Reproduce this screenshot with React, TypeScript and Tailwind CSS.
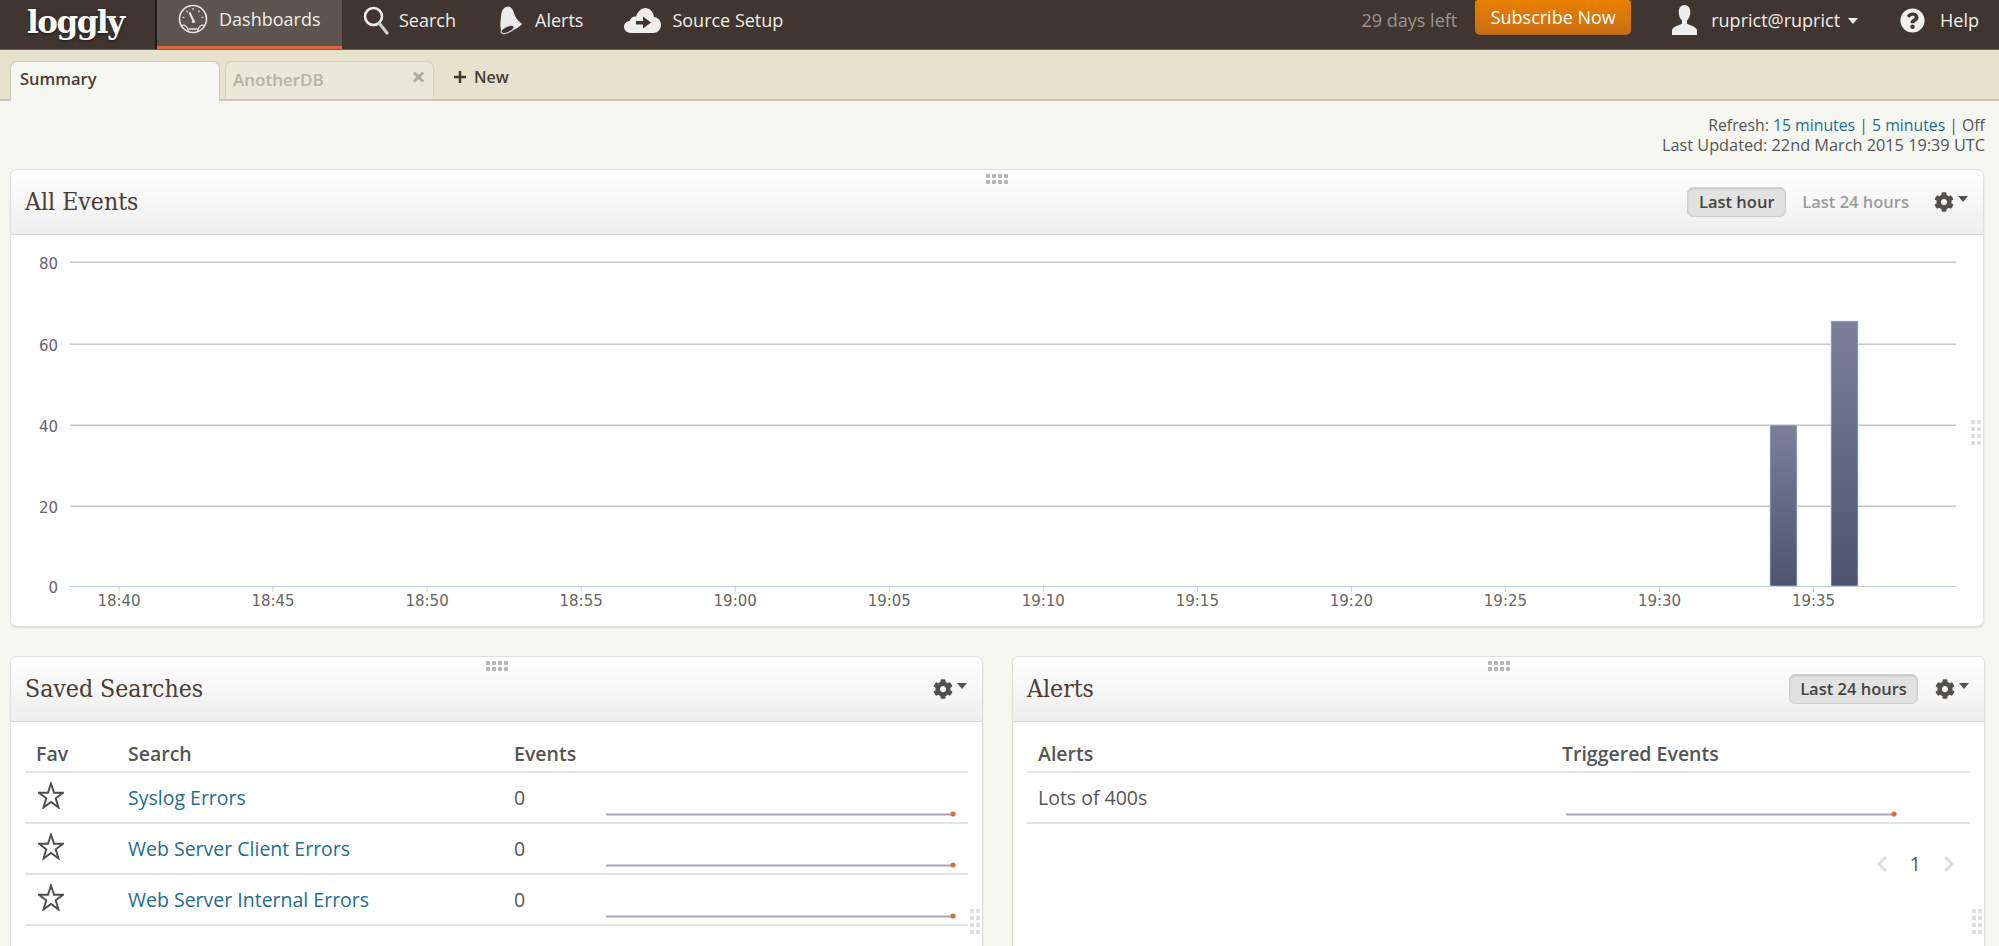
import React from "react";
import { FaCog, FaQuestionCircle, FaChevronLeft, FaChevronRight } from "react-icons/fa";

const sans = "font-['Open_Sans','Noto_Sans',sans-serif]";
const slab = "font-['DejaVu_Serif_Condensed','DejaVu_Serif',serif]";

function Gauge() {
  return (
    <svg width="30" height="30" viewBox="0 0 30 30" fill="none" stroke="#e8e6e3" className="shrink-0">
      <circle cx="15" cy="15" r="13.5" strokeWidth="1.6" />
      <path d="M15 4v3M8.5 6.5l1.5 2.4M21.5 6.5L20 8.9M4.5 13l2.8.7M25.500 13l-2.800.7" strokeWidth="1.2" strokeDasharray="2 1" />
      <path d="M11.500 8.500L15.500 17" strokeWidth="2" />
      <circle cx="15.500" cy="17.500" r="1.600" fill="#e8e6e3" stroke="none" />
      <path d="M3.500 21.500c3.500-1 6 .5 7 6.500M26.500 21.500c-3.500-1-6 .5-7 6.500M10.500 25h9" strokeWidth="1.300" />
    </svg>
  );
}
function SearchIcon() {
  return (
    <svg width="26" height="29" viewBox="0 0 26 29" fill="none" stroke="#eeeeee" className="shrink-0">
      <circle cx="10.500" cy="10.500" r="8.500" strokeWidth="2.600" />
      <path d="M16 17l8 10" strokeWidth="3.200" strokeLinecap="round" stroke="#cfcfcf" />
    </svg>
  );
}
function Bell() {
  return (
    <svg width="25" height="29" viewBox="0 0 25 29" className="shrink-0">
      <path d="M8 1C12-1 15 3 16 7c1 4 4 8 8 11-4 5-14 9-20 9-2-5-2-10-1-15C3 7 4 3 8 1z" fill="#ececec" />
      <ellipse cx="9.500" cy="23.500" rx="7" ry="3" transform="rotate(-26 9.500 23.500)" fill="#40362f" stroke="#d8d8d8" strokeWidth="1.200" />
    </svg>
  );
}
function Cloud() {
  return (
    <svg width="37" height="25" viewBox="0 0 37 25" className="shrink-0">
      <path d="M7 25c-4 0-7-2.700-7-6.200 0-3.300 2.500-5.600 5.800-6C6.800 9.500 9.500 8 12 8.500 13.800 3.500 17.500 0 21 0c5 0 8.500 4 9 9 4 .5 7 3.500 7 8 0 4.500-3.500 8-8 8z" fill="#eeeeee" />
      <path d="M12 13h7V8.500l8 6-8 6V16.500h-7z" fill="#40362f" />
    </svg>
  );
}
function UserIcon() {
  return (
    <svg width="25" height="32" viewBox="0 0 25 32" className="shrink-0">
      <path d="M12.500 0c3.800 0 5.800 3 5.800 7 0 3.500-1.300 6.700-3.300 8.500v3c2.500 2 9 2.800 10 6.500v5H0v-5c1-3.700 7.500-4.500 10-6.500v-3C8 13.700 6.700 10.500 6.700 7c0-4 2-7 5.800-7z" fill="#ededed" />
    </svg>
  );
}
function Caret({ color = "#eeeeee", className = "" }: { color?: string; className?: string }) {
  return (
    <svg width="10" height="6" viewBox="0 0 10 6" className={`shrink-0 ${className}`}>
      <path d="M0 0h10L5 6z" fill={color} />
    </svg>
  );
}
function Star() {
  return (
    <svg width="26" height="27" viewBox="0 0 26 27" fill="none" stroke="#4c4c4c" strokeWidth="1.900">
      <path d="M13 1.500l3 9.300h9l-7.300 5.500 2.800 9.200L13 20l-7.500 5.500 2.800-9.200L1 10.800h9z" />
    </svg>
  );
}
function Spark({ w }: { w: number }) {
  return (
    <svg width={w} height="8" viewBox={`0 0 ${w} 8`} className="block">
      <path d={`M0 4.500H${w - 3}`} stroke="#a9a3bd" strokeWidth="2" />
      <circle cx={w - 3} cy="4" r="2.600" fill="#d8703a" />
    </svg>
  );
}
function GripH() {
  return (
    <div className="absolute left-1/2 top-[4px] -translate-x-1/2 grid grid-cols-[repeat(4,4px)] gap-[2px]">
      {Array.from({ length: 8 }).map((_, i) => (
        <span key={i} className="w-[4px] h-[4px] rounded-[1px] bg-[#b5b5b5]" />
      ))}
    </div>
  );
}
function GripV({ className }: { className: string }) {
  return (
    <div className={`absolute grid grid-cols-[repeat(2,4px)] gap-x-[2px] gap-y-[3px] ${className}`}>
      {Array.from({ length: 8 }).map((_, i) => (
        <span key={i} className="w-[4px] h-[4px] rounded-[1px] bg-[#dddddd]" />
      ))}
    </div>
  );
}
function Gear({ gap = "ml-[4px]" }: { gap?: string }) {
  return (
    <div className="flex items-start">
      <FaCog size={20} color="#54504c" />
      <Caret color="#54504c" className={`${gap} mt-[4px]`} />
    </div>
  );
}
function PanelHeader({ title, children }: { title: string; children?: React.ReactNode }) {
  return (
    <div className="relative h-[65px] flex items-center pl-[14px] pr-[15px] border-b border-[#d6d6d6] rounded-t-[7px] bg-gradient-to-b from-[#ffffff] to-[#eeeeee]">
      <GripH />
      <h2 className={`${slab} text-[24.600px] leading-none font-normal text-[#4a3c33] pt-[1px]`}>{title}</h2>
      <div className="ml-auto flex items-center">{children}</div>
    </div>
  );
}

const ticks = ["18:40", "18:45", "18:50", "18:55", "19:00", "19:05", "19:10", "19:15", "19:20", "19:25", "19:30", "19:35"];

function Chart() {
  return (
    <svg width="1972" height="391" viewBox="11 235 1972 391" className="block">
      <defs>
        <linearGradient id="bar1" x1="0" y1="0" x2="0" y2="1">
          <stop offset="0" stopColor="#7a8099" />
          <stop offset="1" stopColor="#4c5470" />
        </linearGradient>
      </defs>
      {[
        [262, "80"],
        [344, "60"],
        [425, "40"],
        [506, "20"],
        [586, "0"],
      ].map(([y, t]) => (
        <g key={t as string}>
          {t !== "0" && <rect x="70" y={(y as number) - 0.5} width="1886" height="1.400" fill="#c4c4c4" />}
          <text x="58" y={(y as number) + 7} textAnchor="end" fontFamily="DejaVu Sans" fontSize="15" fill="#666666">
            {t}
          </text>
        </g>
      ))}
      <rect x="70" y="586" width="1886" height="1" fill="#b9cde0" />
      {ticks.map((t, i) => (
        <g key={t}>
          <rect x={118.500 + i * 154.050} y="586" width="1" height="6" fill="#c3d3e3" />
          <text x={119 + i * 154.050} y="606" textAnchor="middle" fontFamily="DejaVu Sans" fontSize="15" fill="#666666">
            {t}
          </text>
        </g>
      ))}
      <rect x="1770" y="425" width="27" height="161" fill="url(#bar1)" stroke="#c5cfe0" strokeWidth="0.700" />
      <rect x="1831" y="321" width="27" height="265" fill="url(#bar1)" stroke="#c5cfe0" strokeWidth="0.700" />
    </svg>
  );
}

const searches = ["Syslog Errors", "Web Server Client Errors", "Web Server Internal Errors"];

export default function App() {
  return (
    <div className={`${sans} w-[1999px] h-[946px] overflow-hidden bg-[#f6f7f1] text-[#555555]`}>
      {/* top bar */}
      <header className="h-[50px] flex bg-[#40362f] text-[#f0eeec] text-[18px] border-b border-[#6a6058]">
        <div className="w-[157px] border-r-2 border-[#1f1a17] pl-[27px] flex items-center pb-[5px] shrink-0">
          <span className={`font-['DejaVu_Serif',serif] font-bold text-[31px] leading-none text-white tracking-[-1.500px] [text-shadow:0_1px_3px_rgba(0,0,0,0.6)]`}>
            loggly
          </span>
        </div>
        <a className="w-[185px] h-[49px] shrink-0 flex items-center gap-[11px] pl-[21px] pb-[8px] bg-[#5c544d] border-b-[3px] border-[#d9673f]">
          <Gauge />
          <span>Dashboards</span>
        </a>
        <a className="flex items-center gap-[10px] pl-[21px] pb-[8px]">
          <SearchIcon />
          <span>Search</span>
        </a>
        <a className="flex items-center gap-[12px] pl-[42px] pb-[8px]">
          <Bell />
          <span>Alerts</span>
        </a>
        <a className="flex items-center gap-[11px] pl-[41px] pb-[8px]">
          <Cloud />
          <span>Source Setup</span>
        </a>
        <div className="ml-auto flex items-center pr-[20px] pb-[8px]">
          <span className="text-[#9a958f]">29 days left</span>
          <a className="ml-[18px] self-start mt-0 h-[35px] w-[156px] flex items-center justify-center rounded-b-[5px] rounded-t-[3px] bg-gradient-to-b from-[#ea7f00] to-[#c96f12] border-b border-[#b5651a] text-white">
            Subscribe Now
          </a>
          <span className="ml-[41px]">
            <UserIcon />
          </span>
          <span className="ml-[14px]">ruprict@ruprict</span>
          <Caret className="ml-[8px]" />
          <span className="ml-[42px]">
            <FaQuestionCircle size={25} color="#f0f0f0" />
          </span>
          <span className="ml-[15px]">Help</span>
        </div>
      </header>

      {/* tabs */}
      <nav className="h-[51px] flex items-end pl-[10px] bg-[#e5e2ce] border-b-2 border-[#c9c7b5]">
        <div className="relative -mb-[2px] w-[210px] h-[40px] pl-[9px] pt-[5px] rounded-t-[7px] border border-b-0 border-[#cfccb8] bg-[#f6f7f1] text-[16.500px] font-semibold text-[#4a3c33]">
          Summary
        </div>
        <div className="relative ml-[5px] w-[209px] h-[38px] pl-[7px] pt-[5px] rounded-t-[7px] border border-b-0 border-[#d5d3c1] bg-[#eae8d9] text-[17px] font-semibold text-[#b5b4a5]">
          AnotherDB
          <svg width="13" height="12" viewBox="0 0 13 12" className="absolute right-[8px] top-[9px]">
            <path d="M2 1.500l9 9M11 1.500l-9 9" stroke="#aeada1" strokeWidth="3" />
          </svg>
        </div>
        <div className="ml-[20px] h-[44px] flex items-center gap-[8px] text-[16px] font-semibold text-[#4a3c33]">
          <svg width="12" height="12" viewBox="0 0 12 12">
            <path d="M6 0v12M0 6h12" stroke="#40362f" strokeWidth="2.400" />
          </svg>
          New
        </div>
      </nav>

      {/* refresh */}
      <div className="pt-[14px] pb-[14px] pr-[14px] text-right leading-[20px] text-[#555555]">
        <div className="text-[15.800px]">
          Refresh: <a className="text-[#1f6d8e]">15 minutes</a> | <a className="text-[#1f6d8e]">5 minutes</a> | Off
        </div>
        <div className="text-[16.300px]">Last Updated: 22nd March 2015 19:39 UTC</div>
      </div>

      {/* all events */}
      <section className="relative ml-[10px] w-[1974px] h-[458px] bg-white border border-[#e0e0dc] rounded-[7px] shadow-[0_1px_2px_rgba(0,0,0,0.12)]">
        <PanelHeader title="All Events">
          <span className="h-[30px] w-[99px] flex items-center justify-center rounded-[6px] bg-[#e2e2e2] border border-[#cfcfcf] shadow-[inset_0_1px_2px_rgba(0,0,0,0.15)] text-[16.500px] font-semibold text-[#444444]">
            Last hour
          </span>
          <span className="ml-[16px] text-[16.500px] font-semibold text-[#9b9b9b]">Last 24 hours</span>
          <span className="ml-[25px]">
            <Gear />
          </span>
        </PanelHeader>
        <Chart />
        <GripV className="right-[2px] top-[250px]" />
      </section>

      {/* bottom panels */}
      <div className="mt-[29px] ml-[10px] flex gap-[29px]">
        <section className="relative w-[973px] h-[320px] bg-white border border-[#e0e0dc] rounded-[7px] shadow-[0_1px_2px_rgba(0,0,0,0.12)]">
          <PanelHeader title="Saved Searches">
            <Gear />
          </PanelHeader>
          <div className="mx-[14px] text-[19.500px]">
            <div className="h-[51px] grid grid-cols-[103px_386px_1fr] items-end pb-[3px] border-b-2 border-[#e4e4e4] font-semibold text-[#555555]">
              <span className="pl-[11px]">Fav</span>
              <span>Search</span>
              <span>Events</span>
            </div>
            {searches.map((s) => (
              <div key={s} className="h-[51px] grid grid-cols-[103px_386px_92px_1fr] items-center border-b-2 border-[#e4e4e4]">
                <span className="pl-[13px] -mt-[5px]">
                  <Star />
                </span>
                <a className="text-[#1f6d8e]">{s}</a>
                <span>0</span>
                <span className="self-end mb-[4px]">
                  <Spark w={350} />
                </span>
              </div>
            ))}
          </div>
          <GripV className="right-[2px] top-[252px]" />
        </section>

        <section className="relative w-[973px] h-[320px] bg-white border border-[#e0e0dc] rounded-[7px] shadow-[0_1px_2px_rgba(0,0,0,0.12)]">
          <PanelHeader title="Alerts">
            <span className="h-[30px] w-[129px] flex items-center justify-center rounded-[6px] bg-[#e2e2e2] border border-[#cfcfcf] shadow-[inset_0_1px_2px_rgba(0,0,0,0.15)] text-[16.500px] font-semibold text-[#444444]">
              Last 24 hours
            </span>
            <span className="ml-[17px]">
              <Gear />
            </span>
          </PanelHeader>
          <div className="mx-[14px] text-[19.500px]">
            <div className="h-[51px] grid grid-cols-[535px_1fr] items-end pb-[3px] border-b-2 border-[#e4e4e4] font-semibold text-[#555555]">
              <span className="pl-[11px]">Alerts</span>
              <span>Triggered Events</span>
            </div>
            <div className="h-[51px] grid grid-cols-[539px_1fr] items-center border-b-2 border-[#e4e4e4]">
              <span className="pl-[11px]">Lots of 400s</span>
              <span className="self-end mb-[4px]">
                <Spark w={331} />
              </span>
            </div>
            <div className="mt-[27px] flex items-center justify-end pr-[12px] text-[#555555]">
              <FaChevronLeft size={18} color="#dcdcdc" />
              <span className="mx-[19px] leading-[26px]">1</span>
              <FaChevronRight size={18} color="#dcdcdc" />
            </div>
          </div>
          <GripV className="right-[2px] top-[252px]" />
        </section>
      </div>
    </div>
  );
}
